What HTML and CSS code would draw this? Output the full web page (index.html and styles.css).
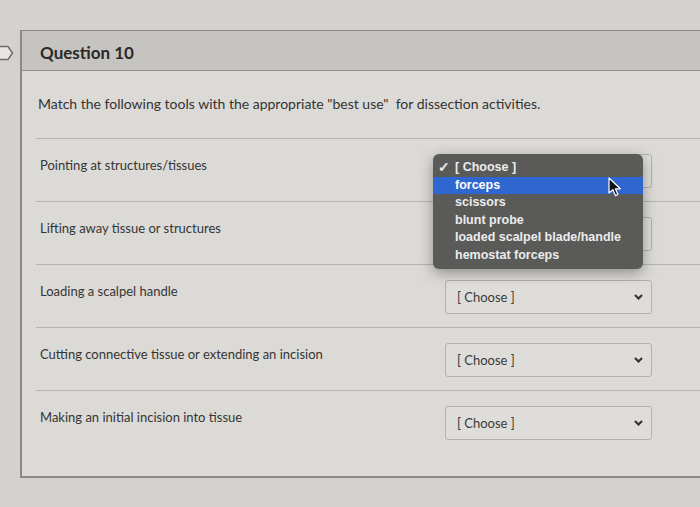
FILE: index.html
```html
<!DOCTYPE html>
<html>
<head>
<meta charset="utf-8">
<link rel="stylesheet" href="styles.css">
</head>
<body>
<div class="page">
  <div class="flag-col">
    <svg class="flag" width="14" height="16" viewBox="0 0 14 16"><path d="M-2 1.5 H8 L12.5 8 L8 14.5 H-2" fill="#e6e5e2" stroke="#6d6c69" stroke-width="1.4" stroke-linejoin="round"/></svg>
  </div>
  <div class="card">
    <div class="card-header">Question 10</div>
    <div class="card-body">
      <div class="question">Match the following tools with the appropriate "best use"&nbsp; for dissection activities.</div>
      <div class="rows">
        <div class="row">
          <div class="label">Pointing at structures/tissues</div>
          <div class="select open">
            <svg class="chev" width="9" height="6" viewBox="0 0 9 6"><path d="M1 1 L4.5 4.5 L8 1" fill="none" stroke="#333" stroke-width="2.2"/></svg>
            <div class="menu">
              <div class="item"><span class="check">✓</span>[ Choose ]</div>
              <div class="item active">forceps</div>
              <div class="item">scissors</div>
              <div class="item">blunt probe</div>
              <div class="item">loaded scalpel blade/handle</div>
              <div class="item">hemostat forceps</div>
              <svg class="cursor" width="15" height="21" viewBox="0 0 15 21"><path d="M1 1 L1 16 L4.8 12.6 L7.4 18.6 L9.9 17.5 L7.4 11.8 L12.3 11.8 Z" fill="#111" stroke="#fff" stroke-width="1.2" stroke-linejoin="round"/></svg>
            </div>
          </div>
        </div>
        <div class="row">
          <div class="label">Lifting away tissue or structures</div>
          <div class="select">
            <span>[ Choose ]</span>
            <svg class="chev" width="9" height="6" viewBox="0 0 9 6"><path d="M1 1 L4.5 4.5 L8 1" fill="none" stroke="#333" stroke-width="2.2"/></svg>
          </div>
        </div>
        <div class="row">
          <div class="label">Loading a scalpel handle</div>
          <div class="select">
            <span>[ Choose ]</span>
            <svg class="chev" width="9" height="6" viewBox="0 0 9 6"><path d="M1 1 L4.5 4.5 L8 1" fill="none" stroke="#333" stroke-width="2.2"/></svg>
          </div>
        </div>
        <div class="row">
          <div class="label">Cutting connective tissue or extending an incision</div>
          <div class="select">
            <span>[ Choose ]</span>
            <svg class="chev" width="9" height="6" viewBox="0 0 9 6"><path d="M1 1 L4.5 4.5 L8 1" fill="none" stroke="#333" stroke-width="2.2"/></svg>
          </div>
        </div>
        <div class="row last">
          <div class="label">Making an initial incision into tissue</div>
          <div class="select">
            <span>[ Choose ]</span>
            <svg class="chev" width="9" height="6" viewBox="0 0 9 6"><path d="M1 1 L4.5 4.5 L8 1" fill="none" stroke="#333" stroke-width="2.2"/></svg>
          </div>
        </div>
      </div>
    </div>
  </div>
</div>
</body>
</html>
```

FILE: styles.css
```css
html, body {
  margin: 0;
  padding: 0;
}
body {
  background: #d4d2ce;
  font-family: Lato, "Liberation Sans", sans-serif;
  overflow: hidden;
  width: 700px;
  height: 507px;
}
.page {
  display: flex;
  padding-top: 30px;
}
.flag-col {
  width: 20px;
  flex-shrink: 0;
}
.flag {
  display: block;
  margin-top: 15px;
}
.card {
  width: 700px;
  flex-shrink: 0;
  border-left: 2px solid #8a8986;
  border-top: 1px solid #8a8986;
  border-bottom: 2px solid #8a8986;
  background: #dcdad6;
}
.card-header {
  background: #c6c4c0;
  border-bottom: 1px solid #8f8e8b;
  display: flex;
  align-items: center;
  padding: 3px 0 0 18px;
  box-sizing: border-box;
  height: 40px;
  font-size: 17px;
  font-weight: 700;
  color: #2a2a2a;
}
.card-body {
  padding-left: 14px;
}
.question {
  padding: 23px 0 24px 2px;
  font-size: 14px;
  line-height: 20px;
  color: #333;
  border-bottom: 1px solid #b4b3af;
}
.row {
  display: flex;
  height: 62px;
  border-bottom: 1px solid #b4b3af;
  padding-left: 4px;
}
.row.last {
  height: 85px;
  border-bottom: none;
}
.label {
  width: 405px;
  flex-shrink: 0;
  padding-top: 16px;
  line-height: 20px;
  font-size: 13px;
  color: #353535;
}
.select {
  position: relative;
  margin-top: 15px;
  border: 1px solid #b2b1ad;
  border-radius: 3px;
  background: #dfddd9;
  display: flex;
  align-items: center;
  justify-content: space-between;
  padding: 0 8px 0 11px;
  box-sizing: border-box;
  width: 207px;
  height: 34px;
  font-size: 13px;
  color: #3a3a3a;
}
.select.open {
  justify-content: flex-end;
}
.chev {
  display: block;
}
.menu {
  position: absolute;
  left: -13px;
  top: -1px;
  width: 210px;
  padding: 5px 0 5px;
  background: #5a5a59;
  border-radius: 6px;
  box-shadow: 0 4px 14px rgba(0, 0, 0, 0.35);
  font-family: "Liberation Sans", Arial, sans-serif;
  font-size: 12.5px;
  font-weight: 700;
  color: #ececec;
  z-index: 5;
}
.item {
  position: relative;
  height: 17.5px;
  line-height: 17.5px;
  padding-left: 22px;
}
.item.active {
  background: #2f66d0;
  color: #fff;
}
.check {
  position: absolute;
  left: 5px;
  top: 0;
  font-size: 14px;
}
.cursor {
  position: absolute;
  left: 175px;
  top: 23px;
}
```
